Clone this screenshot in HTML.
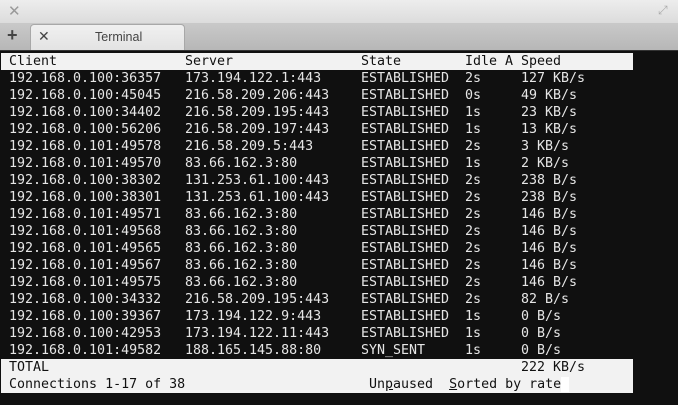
<!DOCTYPE html>
<html><head><style>
html,body{margin:0;padding:0;width:678px;height:405px;overflow:hidden;background:#101010;font-family:"Liberation Sans","DejaVu Sans",sans-serif}
#title{position:absolute;left:0;top:0;width:678px;height:23px;background:linear-gradient(#ededed,#dcdcdc)}
#tabs{position:absolute;left:0;top:23px;width:678px;height:27px;background:linear-gradient(#c9c9c9,#b7b7b7)}
#tab{position:absolute;left:30px;top:24px;width:155px;height:26px;background:linear-gradient(#f0f0f0,#e3e3e3);border:1px solid #a8a8a8;border-bottom:none;border-radius:4px 4px 0 0;box-sizing:border-box}
#line{position:absolute;left:0;top:50px;width:678px;height:1px;background:#333}
#term{position:absolute;left:1px;top:53px;font-family:"DejaVu Sans Mono","Liberation Mono",monospace;font-size:13.3px;line-height:17px;color:#e6e6e6}
#term>div{height:17px;width:632px;position:relative}
#term span{position:absolute;top:0;white-space:pre}
.bar{background:#f2f2f2;color:#111}
.a{left:8px}.b{left:184px}.c{left:360px}.d{left:464px}.e{left:520px}
.cur{background:#fff}
</style></head><body>
<div id="title"><span style="position:absolute;left:8px;top:2px;font-size:15px;color:#999">✕</span><span style="position:absolute;left:658px;top:3px;font-size:12px;color:#aaa">⤢</span></div>
<div id="tabs"><span style="position:absolute;left:7px;top:2px;font-size:18px;color:#444;font-weight:bold">+</span></div>
<div id="tab"><span style="position:absolute;left:7px;top:3px;font-size:14px;color:#444">✕</span><span style="position:absolute;left:64px;top:5px;font-size:12.5px;color:#444">Terminal</span></div>
<div id="line"></div>
<div id="term"><div class="bar"><span class="a">Client</span><span class="b">Server</span><span class="c">State</span><span class="d">Idle A</span><span class="e">Speed</span></div><div><span class="a">192.168.0.100:36357</span><span class="b">173.194.122.1:443</span><span class="c">ESTABLISHED</span><span class="d">2s</span><span class="e">127 KB/s</span></div><div><span class="a">192.168.0.100:45045</span><span class="b">216.58.209.206:443</span><span class="c">ESTABLISHED</span><span class="d">0s</span><span class="e">49 KB/s</span></div><div><span class="a">192.168.0.100:34402</span><span class="b">216.58.209.195:443</span><span class="c">ESTABLISHED</span><span class="d">1s</span><span class="e">23 KB/s</span></div><div><span class="a">192.168.0.100:56206</span><span class="b">216.58.209.197:443</span><span class="c">ESTABLISHED</span><span class="d">1s</span><span class="e">13 KB/s</span></div><div><span class="a">192.168.0.101:49578</span><span class="b">216.58.209.5:443</span><span class="c">ESTABLISHED</span><span class="d">2s</span><span class="e">3 KB/s</span></div><div><span class="a">192.168.0.101:49570</span><span class="b">83.66.162.3:80</span><span class="c">ESTABLISHED</span><span class="d">1s</span><span class="e">2 KB/s</span></div><div><span class="a">192.168.0.100:38302</span><span class="b">131.253.61.100:443</span><span class="c">ESTABLISHED</span><span class="d">2s</span><span class="e">238 B/s</span></div><div><span class="a">192.168.0.100:38301</span><span class="b">131.253.61.100:443</span><span class="c">ESTABLISHED</span><span class="d">2s</span><span class="e">238 B/s</span></div><div><span class="a">192.168.0.101:49571</span><span class="b">83.66.162.3:80</span><span class="c">ESTABLISHED</span><span class="d">2s</span><span class="e">146 B/s</span></div><div><span class="a">192.168.0.101:49568</span><span class="b">83.66.162.3:80</span><span class="c">ESTABLISHED</span><span class="d">2s</span><span class="e">146 B/s</span></div><div><span class="a">192.168.0.101:49565</span><span class="b">83.66.162.3:80</span><span class="c">ESTABLISHED</span><span class="d">2s</span><span class="e">146 B/s</span></div><div><span class="a">192.168.0.101:49567</span><span class="b">83.66.162.3:80</span><span class="c">ESTABLISHED</span><span class="d">2s</span><span class="e">146 B/s</span></div><div><span class="a">192.168.0.101:49575</span><span class="b">83.66.162.3:80</span><span class="c">ESTABLISHED</span><span class="d">2s</span><span class="e">146 B/s</span></div><div><span class="a">192.168.0.100:34332</span><span class="b">216.58.209.195:443</span><span class="c">ESTABLISHED</span><span class="d">2s</span><span class="e">82 B/s</span></div><div><span class="a">192.168.0.100:39367</span><span class="b">173.194.122.9:443</span><span class="c">ESTABLISHED</span><span class="d">1s</span><span class="e">0 B/s</span></div><div><span class="a">192.168.0.100:42953</span><span class="b">173.194.122.11:443</span><span class="c">ESTABLISHED</span><span class="d">1s</span><span class="e">0 B/s</span></div><div><span class="a">192.168.0.101:49582</span><span class="b">188.165.145.88:80</span><span class="c">SYN_SENT</span><span class="d">1s</span><span class="e">0 B/s</span></div><div class="bar"><span class="a">TOTAL</span><span class="e">222 KB/s</span></div><div class="bar"><span class="a">Connections 1-17 of 38</span><span style="left:368px">Un<u>p</u>aused  <u>S</u>orted by rate<span class="cur" style="position:static"> </span></span></div></div>
</body></html>
